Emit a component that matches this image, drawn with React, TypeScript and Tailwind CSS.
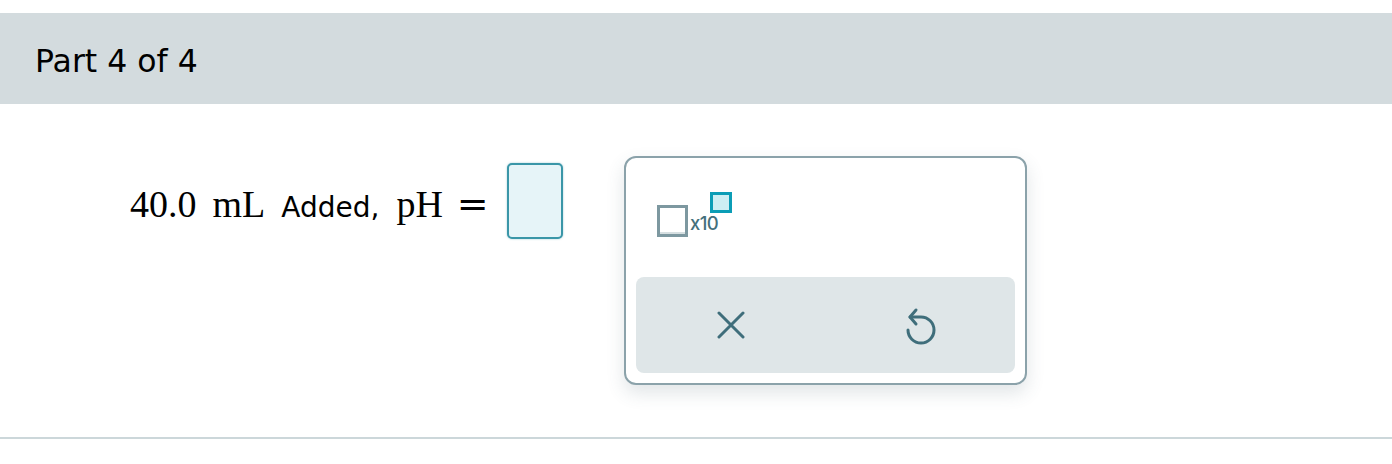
import React from "react";

function XIcon() {
  return (
    <svg width="28" height="28" viewBox="0 0 28 28" fill="none">
      <path d="M2 2 L26 26 M26 2 L2 26" stroke="#3f6e7b" strokeWidth="3" strokeLinecap="round" />
    </svg>
  );
}

function UndoIcon() {
  return (
    <svg width="34" height="40" viewBox="0 0 34 40" fill="none">
      <path d="M12 4 L6 11 L12 18" stroke="#3f6e7b" strokeWidth="3" strokeLinecap="round" strokeLinejoin="round" />
      <path d="M6 11 H17 A13 13 0 1 1 4 24" stroke="#3f6e7b" strokeWidth="3" strokeLinecap="round" strokeLinejoin="round" />
    </svg>
  );
}

function ExpIcon() {
  return (
    <div className="flex items-start">
      <div className="mt-[13px] w-[31px] h-[32px] border-[3px] border-[#7d98a0] bg-white flex flex-col justify-end">
        <div className="h-[2px] bg-[#d6dfe1]" />
      </div>
      <div
        className="mt-[22px] ml-[2px] text-[18.5px] leading-[18px] font-medium tracking-[-0.6px] text-[#44707c]"
        style={{ fontFamily: "Inter, 'Noto Sans', sans-serif" }}
      >
        x10
      </div>
      <div className="-ml-[8px] w-[22px] h-[21px] border-[3px] border-[#0b9db6] bg-[#cdeef3]" />
    </div>
  );
}

export default function App() {
  return (
    <div className="w-full h-[464px] bg-white pt-[13px] overflow-hidden">
      <div className="h-[91px] bg-[#d3dbde] pl-[35px] pt-[33px]">
        <div
          className="text-[31.5px] leading-[31px] text-black"
          style={{ fontFamily: "'DejaVu Sans', Verdana, sans-serif" }}
        >
          Part 4 of 4
        </div>
      </div>

      <div className="flex items-start pl-[130px] pt-[52px]">
        <div className="w-[494px] flex items-start">
          <div
            className="mt-[29px] text-[38px] leading-[38px] text-black whitespace-nowrap"
            style={{ fontFamily: "'Liberation Serif', 'Times New Roman', serif" }}
          >
            <span>40.0</span>
            <span className="ml-[16px]">mL</span>
            <span
              className="ml-[16px] text-[28px]"
              style={{ fontFamily: "'DejaVu Sans', Verdana, sans-serif" }}
            >
              Added,
            </span>
            <span className="ml-[17px]">pH</span>
            <span
              className="ml-[14px]"
              style={{ fontFamily: "'DejaVu Serif', serif" }}
            >
              =
            </span>
          </div>
          <div className="ml-[18px] mt-[7px] w-[56px] h-[76px] rounded-[5px] border-2 border-[#3a96a8] bg-[#e6f4f8] shadow-[0_0_2px_rgba(58,150,168,0.5)]" />
        </div>

        <div className="w-[403px] h-[229px] border-2 border-[#8ba2aa] rounded-[12px] bg-white shadow-[0_8px_18px_rgba(70,95,105,0.16)] p-[10px] flex flex-col">
          <div className="h-[109px] pl-[21px] pt-[24px]">
            <ExpIcon />
          </div>
          <div className="h-[96px] rounded-[8px] bg-[#dfe6e8] flex">
            <div className="flex-1 flex items-center justify-center">
              <XIcon />
            </div>
            <div className="flex-1 flex items-center justify-center">
              <div className="mt-[1px] ml-[2px]">
                <UndoIcon />
              </div>
            </div>
          </div>
        </div>
      </div>

      <div className="mt-[52px] h-[2px] bg-[#ccd7da]" />
    </div>
  );
}
